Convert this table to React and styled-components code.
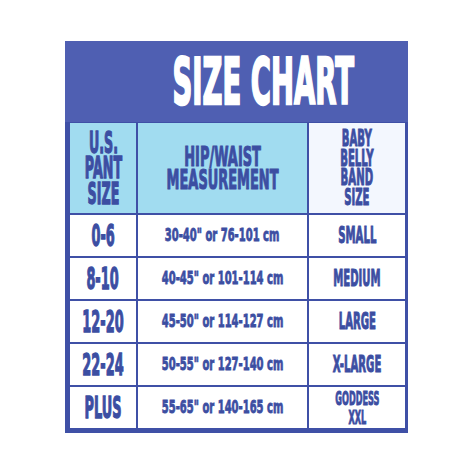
import React from 'react';
import styled, { createGlobalStyle } from 'styled-components';

const GlobalStyle = createGlobalStyle`
  html, body {
    margin: 0;
    padding: 0;
    background: #ffffff;
  }
`;

const Page = styled.div`
  width: 474px;
  height: 474px;
  padding: 41px 0 0 65px;
  box-sizing: border-box;
  background: #ffffff;
`;

const Chart = styled.div`
  width: 343px;
  box-sizing: border-box;
  border-left: 5px solid #3f50a6;
  border-right: 3px solid #3f50a6;
  border-bottom: 5px solid #3f50a6;
  background: #3f50a6;
`;

const TitleBand = styled.div`
  height: 81px;
  margin-left: -5px;
  margin-right: -3px;
  background: #4f5fb2;
  display: flex;
  align-items: center;
  justify-content: center;
  padding-left: 54px;
  box-sizing: border-box;
  overflow: hidden;
`;

const Grid = styled.div`
  display: grid;
  grid-template-columns: 66px 169px 96px;
  grid-template-rows: 90px repeat(5, 41px);
  gap: 2px;
  padding-top: 1px;
  background: #3f50a6;
`;

const Cell = styled.div`
  background: ${(p) => p.$bg || '#ffffff'};
  display: flex;
  align-items: center;
  justify-content: center;
  text-align: center;
  overflow: hidden;
`;

const Label = styled.span`
  display: inline-block;
  font-family: "DejaVu Sans", "Liberation Sans", sans-serif;
  font-weight: 700;
  font-size: ${(p) => p.$size}px;
  line-height: ${(p) => p.$lh || p.$size}px;
  color: ${(p) => p.$color || '#3c4ea2'};
  -webkit-text-stroke: ${(p) => p.$stroke || 1}px ${(p) => p.$color || '#3c4ea2'};
  transform: scaleX(${(p) => p.$sx});
  white-space: nowrap;
`;

const Line = styled.span`
  display: block;
  height: ${(p) => p.$h}px;
  overflow: visible;
`;

const rows = [
  { pant: '0-6', hip: '30-40" or 76-101 cm', band: ['SMALL'] },
  { pant: '8-10', hip: '40-45" or 101-114 cm', band: ['MEDIUM'] },
  { pant: '12-20', hip: '45-50" or 114-127 cm', band: ['LARGE'] },
  { pant: '22-24', hip: '50-55" or 127-140 cm', band: ['X-LARGE'] },
  { pant: 'PLUS', hip: '55-65" or 140-165 cm', band: ['GODDESS', 'XXL'] },
];

const lines = (list, h) =>
  list.map((t) => (
    <Line key={t} $h={h}>
      {t}
    </Line>
  ));

const App = () => {
  return (
    <Page>
      <GlobalStyle />
      <Chart>
        <TitleBand>
          <Label $size={64} $lh={70} $sx={0.43} $stroke={2.5} $color="#ffffff">
            SIZE CHART
          </Label>
        </TitleBand>
        <Grid>
          <Cell $bg="#a1dcf0">
            <Label $size={31} $lh={25.5} $sx={0.41} $stroke={1.4}>
              {lines(['U.S.', 'PANT', 'SIZE'], 25.5)}
            </Label>
          </Cell>
          <Cell $bg="#a1dcf0">
            <Label $size={27} $lh={23} $sx={0.48} $stroke={1.2}>
              {lines(['HIP/WAIST', 'MEASUREMENT'], 23)}
            </Label>
          </Cell>
          <Cell $bg="#f3f7fe">
            <Label $size={23} $lh={19.5} $sx={0.44} $stroke={1.1}>
              {lines(['BABY', 'BELLY', 'BAND', 'SIZE'], 19.5)}
            </Label>
          </Cell>

          {rows.map((r) => (
            <React.Fragment key={r.pant}>
              <Cell>
                <Label $size={30} $sx={0.43} $stroke={1.4}>
                  {r.pant}
                </Label>
              </Cell>
              <Cell>
                <Label $size={18.5} $sx={0.54} $stroke={0.9}>
                  {r.hip}
                </Label>
              </Cell>
              <Cell>
                {r.band.length > 1 ? (
                  <Label $size={19} $lh={19} $sx={0.43} $stroke={1}>
                    {lines(r.band, 19)}
                  </Label>
                ) : (
                  <Label $size={23} $sx={0.44} $stroke={1.1}>
                    {r.band[0]}
                  </Label>
                )}
              </Cell>
            </React.Fragment>
          ))}
        </Grid>
      </Chart>
    </Page>
  );
};

export default App;
